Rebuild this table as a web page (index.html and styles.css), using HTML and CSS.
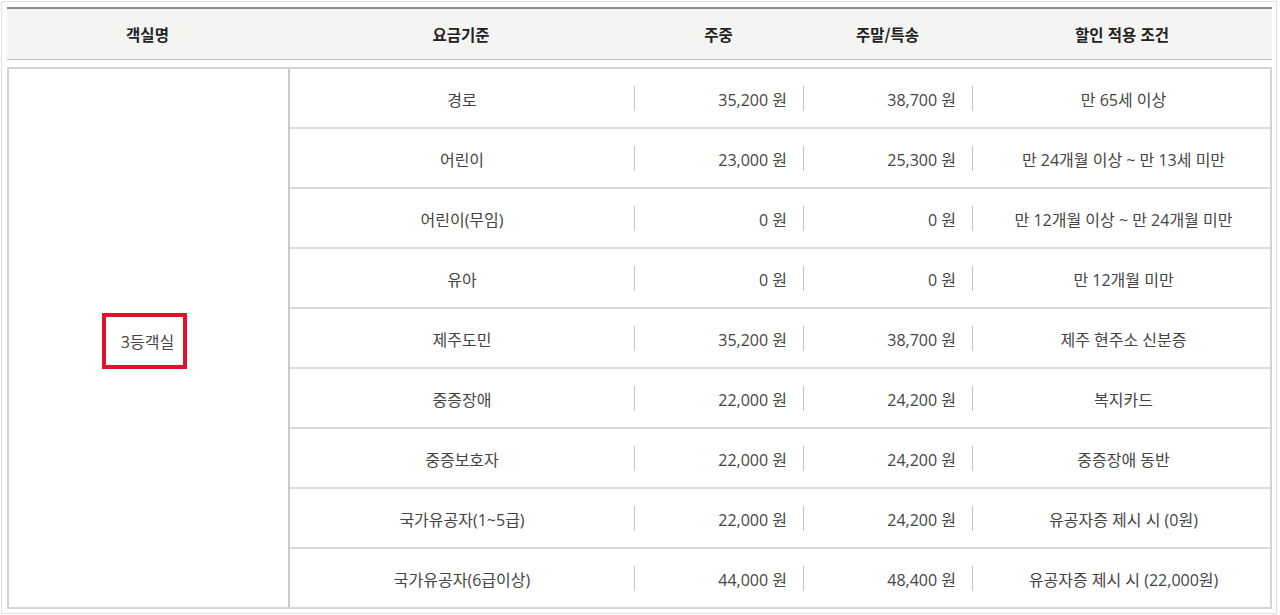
FILE: index.html
```html
<!DOCTYPE html>
<html lang="ko">
<head>
<meta charset="utf-8">
<title>객실 요금</title>
<link rel="stylesheet" href="styles.css">
</head>
<body>
<div class="frame">
  <div class="thead">
    <div class="th c-room">객실명</div>
    <div class="th c-type">요금기준</div>
    <div class="th c-wd">주중</div>
    <div class="th c-we">주말/특송</div>
    <div class="th c-cond">할인 적용 조건</div>
  </div>
  <div class="tbody">
    <div class="room-cell"><span class="room-name">3등객실</span></div>
    <div class="rows">
      <div class="row"><div class="td c-type2">경로</div><div class="td num">35,200 원</div><div class="td num">38,700 원</div><div class="td cond">만 65세 이상</div></div>
      <div class="row"><div class="td c-type2">어린이</div><div class="td num">23,000 원</div><div class="td num">25,300 원</div><div class="td cond">만 24개월 이상 ~ 만 13세 미만</div></div>
      <div class="row"><div class="td c-type2">어린이(무임)</div><div class="td num">0 원</div><div class="td num">0 원</div><div class="td cond">만 12개월 이상 ~ 만 24개월 미만</div></div>
      <div class="row"><div class="td c-type2">유아</div><div class="td num">0 원</div><div class="td num">0 원</div><div class="td cond">만 12개월 미만</div></div>
      <div class="row"><div class="td c-type2">제주도민</div><div class="td num">35,200 원</div><div class="td num">38,700 원</div><div class="td cond">제주 현주소 신분증</div></div>
      <div class="row"><div class="td c-type2">중증장애</div><div class="td num">22,000 원</div><div class="td num">24,200 원</div><div class="td cond">복지카드</div></div>
      <div class="row"><div class="td c-type2">중증보호자</div><div class="td num">22,000 원</div><div class="td num">24,200 원</div><div class="td cond">중증장애 동반</div></div>
      <div class="row"><div class="td c-type2">국가유공자(1~5급)</div><div class="td num">22,000 원</div><div class="td num">24,200 원</div><div class="td cond">유공자증 제시 시 (0원)</div></div>
      <div class="row"><div class="td c-type2">국가유공자(6급이상)</div><div class="td num">44,000 원</div><div class="td num">48,400 원</div><div class="td cond">유공자증 제시 시 (22,000원)</div></div>
    </div>
  </div>
</div>
</body>
</html>
```
FILE: styles.css
```css
html, body {
  margin: 0;
  padding: 0;
  background: #ffffff;
}
body {
  font-family: "Open Sans", "Noto Sans CJK KR", sans-serif;
  font-size: 16px;
  color: #444;
}
.frame {
  box-sizing: border-box;
  margin: 1px 0 0 1px;
  width: 1276px;
  height: 613px;
  border: 1px solid #e0e0e0;
  padding: 5px 4px 0 5px;
}
.thead {
  display: flex;
  height: 53px;
  box-sizing: border-box;
  background: #f4f4f2;
  border-top: 2px solid #8c8c8c;
  border-bottom: 1px solid #bdbdbd;
  width: 1265px;
}
.th {
  display: flex;
  align-items: center;
  justify-content: center;
  font-family: "Noto Sans CJK KR", sans-serif;
  font-weight: bold;
  color: #222;
  font-size: 15.5px;
}
.c-room { width: 281px; }
.c-type { width: 346px; }
.c-wd { width: 169px; }
.c-we { width: 169px; }
.c-cond { flex: 1; }
.tbody {
  display: flex;
  margin-top: 7px;
  width: 1265px;
  box-sizing: border-box;
  border: 2px solid #d4d4d4;
}
.room-cell {
  border-right: 2px solid #cacaca;
  display: flex;
  align-items: center;
  justify-content: center;
  padding-right: 8px;
  padding-top: 6px;
  box-sizing: border-box;
  width: 281px;
}
.room-name {
  border: 4px solid #e5102b;
  height: 48px;
  line-height: 50px;
  padding: 0 9px 0 15px;
  color: #444;
}
.rows {
  flex: 1;
  display: flex;
  flex-direction: column;
}
.row {
  display: grid;
  grid-template-columns: 344px 169px 169px 1fr;
  align-items: center;
  height: 60px;
  box-sizing: border-box;
  border-bottom: 2px solid #dcdcdc;
}
.row:last-child {
  border-bottom: 0;
  height: 58px;
}
.td {
  height: 25px;
  line-height: 28px;
  white-space: nowrap;
}
.c-type2 {
  text-align: center;
}
.num {
  border-left: 1px solid #c4c4c4;
  text-align: right;
  padding-right: 16px;
}
.cond {
  border-left: 1px solid #c4c4c4;
  text-align: center;
  padding-left: 4px;
}
```
